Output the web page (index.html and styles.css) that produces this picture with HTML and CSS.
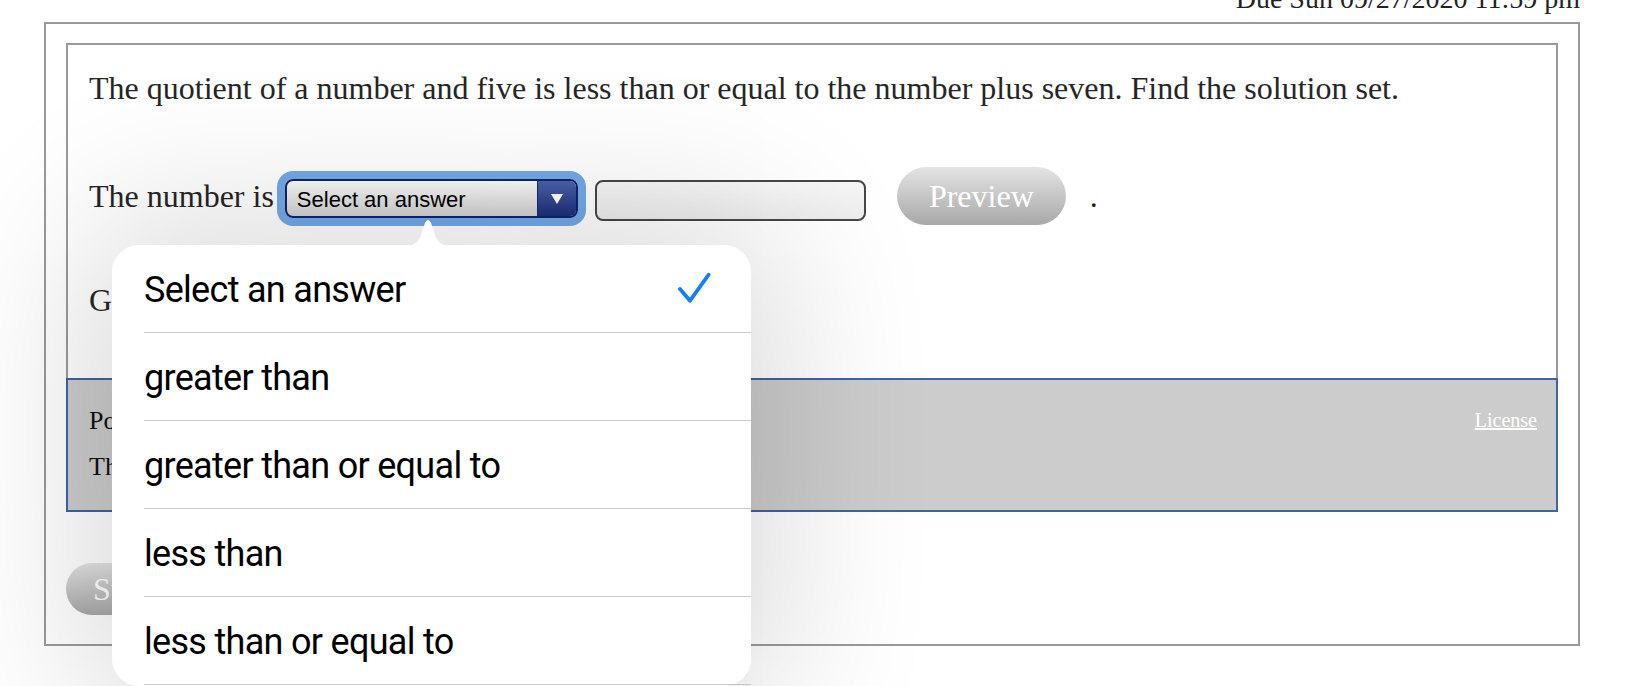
FILE: index.html
```html
<!DOCTYPE html>
<html lang="en">
<head>
<meta charset="utf-8">
<title>Question</title>
<link rel="stylesheet" href="styles.css">
</head>
<body>
<div class="page">
  <div class="due">Due Sun 09/27/2020 11:59 pm</div>
  <div class="outer">
    <div class="panel">
      <p class="question">The quotient of a number and five is less than or equal to the number plus seven. Find the solution set.</p>
      <div class="answer-row">
        <span class="label">The number is</span>
        <div class="select">
          <span class="select-text">Select an answer</span>
          <span class="select-arrow"><svg width="14" height="12" viewBox="0 0 14 12"><polygon points="1,1 13,1 7,11" fill="#fff"/></svg></span>
        </div>
        <div class="input"></div>
        <button class="btn preview">Preview</button>
        <span class="dot">.</span>
      </div>
      <p class="similar">Get a similar question</p>
      <div class="band">
        <div class="band-text">
          <div>Points possible: 1</div>
          <div>This is attempt 1 of 3.</div>
        </div>
        <a class="license" href="#">License</a>
      </div>
    </div>
    <button class="btn submit">Submit</button>
  </div>

  <div class="popover">
    <svg class="pop-arrow" width="52" height="28" viewBox="0 0 52 28"><path d="M0 28 C10 28 14 26 18 20 L23 5 Q26 -1 29 5 L34 20 C38 26 42 28 52 28 Z" fill="#fff"/></svg>
    <div class="option selected">
      <span>Select an answer</span>
      <svg class="check" width="34" height="32" viewBox="0 0 34 32"><polyline points="2,17 12,28.7 30.7,2.7" fill="none" stroke="#167efb" stroke-width="3.8" stroke-linecap="round" stroke-linejoin="round"/></svg>
    </div>
    <div class="option"><span>greater than</span></div>
    <div class="option"><span>greater than or equal to</span></div>
    <div class="option"><span>less than</span></div>
    <div class="option"><span>less than or equal to</span></div>
  </div>
</div>
</body>
</html>
```
FILE: styles.css
```css
html, body {
  margin: 0;
  background: #ffffff;
}

body {
  font-family: "Liberation Serif", "Times New Roman", serif;
  color: #262626;
  overflow: hidden;
  height: 686px;
}

.page {
  display: flow-root;
  position: relative;
  width: 1536px;
  padding-left: 44px;
  height: 686px;
}

.due {
  font-size: 28px;
  line-height: 22px;
  height: 22px;
  margin-top: -12px;
  margin-bottom: 12px;
  text-align: right;
  color: #222;
}

.outer {
  border: 2px solid #9a9a9a;
  padding: 19px 20px 29px 20px;
  background: #fff;
}

.panel {
  border: 2px solid #9a9a9a;
  border-bottom: none;
  padding: 23px 21px 0 21px;
  background: #fff;
}

.question {
  margin: 0;
  font-size: 32px;
  line-height: 40px;
}

.answer-row {
  margin-top: 59px;
  height: 58px;
  display: flex;
  align-items: center;
}

.label {
  font-size: 32px;
  line-height: 40px;
}

.select {
  margin-left: 11px;
  margin-top: 5px;
  width: 293px;
  height: 39px;
  box-sizing: border-box;
  border: 2px solid #10246a;
  border-radius: 8px;
  box-shadow: 0 0 0 8px #74a9e6;
  background: linear-gradient(#fbfbfb, #d0d0d0);
  display: flex;
  align-items: stretch;
  overflow: hidden;
}

.select-text {
  flex: 1;
  font-family: "Liberation Sans", Arial, sans-serif;
  font-size: 22px;
  line-height: 37px;
  padding-left: 10px;
  color: #000;
}

.select-arrow {
  width: 38px;
  border-left: 1px solid #15286b;
  background: linear-gradient(#4c64ae, #1c2e78);
  display: flex;
  align-items: center;
  justify-content: center;
}

.input {
  margin-left: 17px;
  margin-top: 9px;
  width: 271px;
  height: 41px;
  box-sizing: border-box;
  border: 2px solid #474747;
  border-radius: 8px;
  background: linear-gradient(#f7f7f7, #ededed);
}

.btn {
  border: none;
  border-radius: 30px;
  background: linear-gradient(#e4e4e4, #a8a8a8);
  color: #fff;
  font-family: "Liberation Serif", "Times New Roman", serif;
  font-size: 32px;
  padding: 0;
}

.preview {
  margin-left: 31px;
  width: 169px;
  height: 58px;
}

.dot {
  margin-left: 24px;
  font-size: 32px;
  line-height: 40px;
  margin-top: 0;
}

.similar {
  margin: 55px 0 0 0;
  font-size: 32px;
  line-height: 40px;
}

.band {
  margin: 58px -23px 0 -23px;
  border: 2px solid #3e64a4;
  background: #cccccc;
  padding: 18px 19px 20px 21px;
  display: flex;
  justify-content: space-between;
  align-items: flex-start;
}

.band-text {
  font-size: 26px;
  line-height: 46px;
  color: #111;
}

.license {
  font-size: 20px;
  line-height: 24px;
  margin-top: 10px;
  color: #fff;
  text-decoration: underline;
}

.submit {
  display: block;
  margin-top: 51px;
  width: 150px;
  height: 52px;
  text-align: left;
  padding-left: 27px;
}

.popover {
  position: absolute;
  left: 112px;
  top: 245px;
  width: 639px;
  height: 441px;
  background: #fff;
  border-radius: 27px;
  box-shadow: 0 0 160px 25px rgba(0, 0, 0, 0.16);
  font-family: Roboto, "Liberation Sans", sans-serif;
  color: #000;
}

.pop-arrow {
  position: absolute;
  left: 290px;
  top: -27px;
  display: block;
}

.option {
  margin-left: 32px;
  height: 84px;
  padding-top: 3px;
  border-bottom: 1px solid #c8c7cc;
  display: flex;
  align-items: center;
  justify-content: space-between;
  font-size: 36px;
  letter-spacing: -0.7px;
}

.check {
  margin-right: 39px;
  margin-top: -4px;
  display: block;
}
```
